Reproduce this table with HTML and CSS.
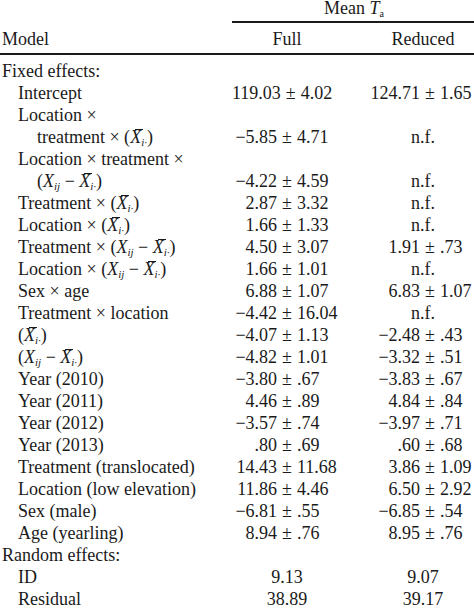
FILE: index.html
```html
<!DOCTYPE html>
<html lang="en">
<head>
<meta charset="utf-8">
<title>Mean Ta model table</title>
<link rel="stylesheet" href="styles.css">
</head>
<body>
<div class="page">
  <div class="tbl">
    <div class="hcell"></div>
    <div class="hcell mean">Mean <i>T</i><sub class="up">a</sub></div>

    <div class="hcell2 lab l0">Model</div>
    <div class="hcell2 c">Full</div>
    <div class="hcell2 c">Reduced</div>

    <div class="gap"></div>

    <div class="lab l0">Fixed effects:</div><div></div><div></div>

    <div class="lab l1">Intercept</div>
    <div class="val"><span class="a">119.03</span><span class="pm">±</span><span class="b">4.02</span></div>
    <div class="val r"><span class="a">124.71</span><span class="pm">±</span><span class="b">1.65</span></div>

    <div class="lab l1">Location ×</div><div></div><div></div>

    <div class="lab l2">treatment × (<span class="xb"><i>X</i></span><sub>i·</sub>)</div>
    <div class="val"><span class="a">−5.85</span><span class="pm">±</span><span class="b">4.71</span></div>
    <div class="c">n.f.</div>

    <div class="lab l1">Location × treatment ×</div><div></div><div></div>

    <div class="lab l2">(<i>X</i><sub>ij</sub> − <span class="xb"><i>X</i></span><sub>i·</sub>)</div>
    <div class="val"><span class="a">−4.22</span><span class="pm">±</span><span class="b">4.59</span></div>
    <div class="c">n.f.</div>

    <div class="lab l1">Treatment × (<span class="xb"><i>X</i></span><sub>i·</sub>)</div>
    <div class="val"><span class="a">2.87</span><span class="pm">±</span><span class="b">3.32</span></div>
    <div class="c">n.f.</div>

    <div class="lab l1">Location × (<span class="xb"><i>X</i></span><sub>i·</sub>)</div>
    <div class="val"><span class="a">1.66</span><span class="pm">±</span><span class="b">1.33</span></div>
    <div class="c">n.f.</div>

    <div class="lab l1">Treatment × (<i>X</i><sub>ij</sub> − <span class="xb"><i>X</i></span><sub>i·</sub>)</div>
    <div class="val"><span class="a">4.50</span><span class="pm">±</span><span class="b">3.07</span></div>
    <div class="val r"><span class="a">1.91</span><span class="pm">±</span><span class="b">.73</span></div>

    <div class="lab l1">Location × (<i>X</i><sub>ij</sub> − <span class="xb"><i>X</i></span><sub>i·</sub>)</div>
    <div class="val"><span class="a">1.66</span><span class="pm">±</span><span class="b">1.01</span></div>
    <div class="c">n.f.</div>

    <div class="lab l1">Sex × age</div>
    <div class="val"><span class="a">6.88</span><span class="pm">±</span><span class="b">1.07</span></div>
    <div class="val r"><span class="a">6.83</span><span class="pm">±</span><span class="b">1.07</span></div>

    <div class="lab l1">Treatment × location</div>
    <div class="val"><span class="a">−4.42</span><span class="pm">±</span><span class="b">16.04</span></div>
    <div class="c">n.f.</div>

    <div class="lab l1">(<span class="xb"><i>X</i></span><sub>i·</sub>)</div>
    <div class="val"><span class="a">−4.07</span><span class="pm">±</span><span class="b">1.13</span></div>
    <div class="val r"><span class="a">−2.48</span><span class="pm">±</span><span class="b">.43</span></div>

    <div class="lab l1">(<i>X</i><sub>ij</sub> − <span class="xb"><i>X</i></span><sub>i·</sub>)</div>
    <div class="val"><span class="a">−4.82</span><span class="pm">±</span><span class="b">1.01</span></div>
    <div class="val r"><span class="a">−3.32</span><span class="pm">±</span><span class="b">.51</span></div>

    <div class="lab l1">Year (2010)</div>
    <div class="val"><span class="a">−3.80</span><span class="pm">±</span><span class="b">.67</span></div>
    <div class="val r"><span class="a">−3.83</span><span class="pm">±</span><span class="b">.67</span></div>

    <div class="lab l1">Year (2011)</div>
    <div class="val"><span class="a">4.46</span><span class="pm">±</span><span class="b">.89</span></div>
    <div class="val r"><span class="a">4.84</span><span class="pm">±</span><span class="b">.84</span></div>

    <div class="lab l1">Year (2012)</div>
    <div class="val"><span class="a">−3.57</span><span class="pm">±</span><span class="b">.74</span></div>
    <div class="val r"><span class="a">−3.97</span><span class="pm">±</span><span class="b">.71</span></div>

    <div class="lab l1">Year (2013)</div>
    <div class="val"><span class="a">.80</span><span class="pm">±</span><span class="b">.69</span></div>
    <div class="val r"><span class="a">.60</span><span class="pm">±</span><span class="b">.68</span></div>

    <div class="lab l1">Treatment (translocated)</div>
    <div class="val"><span class="a">14.43</span><span class="pm">±</span><span class="b">11.68</span></div>
    <div class="val r"><span class="a">3.86</span><span class="pm">±</span><span class="b">1.09</span></div>

    <div class="lab l1">Location (low elevation)</div>
    <div class="val"><span class="a">11.86</span><span class="pm">±</span><span class="b">4.46</span></div>
    <div class="val r"><span class="a">6.50</span><span class="pm">±</span><span class="b">2.92</span></div>

    <div class="lab l1">Sex (male)</div>
    <div class="val"><span class="a">−6.81</span><span class="pm">±</span><span class="b">.55</span></div>
    <div class="val r"><span class="a">−6.85</span><span class="pm">±</span><span class="b">.54</span></div>

    <div class="lab l1">Age (yearling)</div>
    <div class="val"><span class="a">8.94</span><span class="pm">±</span><span class="b">.76</span></div>
    <div class="val r"><span class="a">8.95</span><span class="pm">±</span><span class="b">.76</span></div>

    <div class="lab l0">Random effects:</div><div></div><div></div>

    <div class="lab l1">ID</div>
    <div class="c">9.13</div>
    <div class="c">9.07</div>

    <div class="lab l1">Residual</div>
    <div class="c">38.89</div>
    <div class="c">39.17</div>
  </div>
</div>
</body>
</html>
```

FILE: styles.css
```css
html, body {
  margin: 0;
  padding: 0;
  background: #ffffff;
}

.page {
  width: 474px;
  overflow: hidden;
  font-family: "Liberation Serif", "Times New Roman", serif;
  font-size: 18px;
  color: #1a1a1a;
}

.tbl {
  display: grid;
  grid-template-columns: 232px 110px 162px;
  width: 504px;
  line-height: 22px;
  white-space: nowrap;
}

.hcell {
  line-height: 16px;
  padding-bottom: 5px;
}

.mean {
  grid-column: 2 / 4;
  text-align: center;
  padding-right: 28px;
  border-bottom: 2px solid #1a1a1a;
}

.hcell2 {
  padding-top: 5px;
  padding-bottom: 3px;
  border-bottom: 2px solid #1a1a1a;
}

.gap {
  grid-column: 1 / -1;
  height: 5px;
}

.lab {
  text-align: left;
}

.l0 { padding-left: 2px; }
.l1 { padding-left: 18px; }
.l2 { padding-left: 37px; }

.c {
  text-align: center;
}

.val {
  display: grid;
  grid-template-columns: 1fr auto 1fr;
}

.val.r {
  padding-left: 14px;
}

.val .a { text-align: right; }
.val .b { text-align: left; }
.val .pm { padding: 0 5px; }

sub {
  font-size: 11px;
  line-height: 0;
  vertical-align: -3px;
  font-style: italic;
}

sub.up {
  font-style: normal;
  font-size: 10px;
}

.xb {
  position: relative;
}

.xb::after {
  content: "";
  position: absolute;
  left: 5px;
  width: 8px;
  top: 2px;
  border-top: 1px solid #1a1a1a;
}
```
